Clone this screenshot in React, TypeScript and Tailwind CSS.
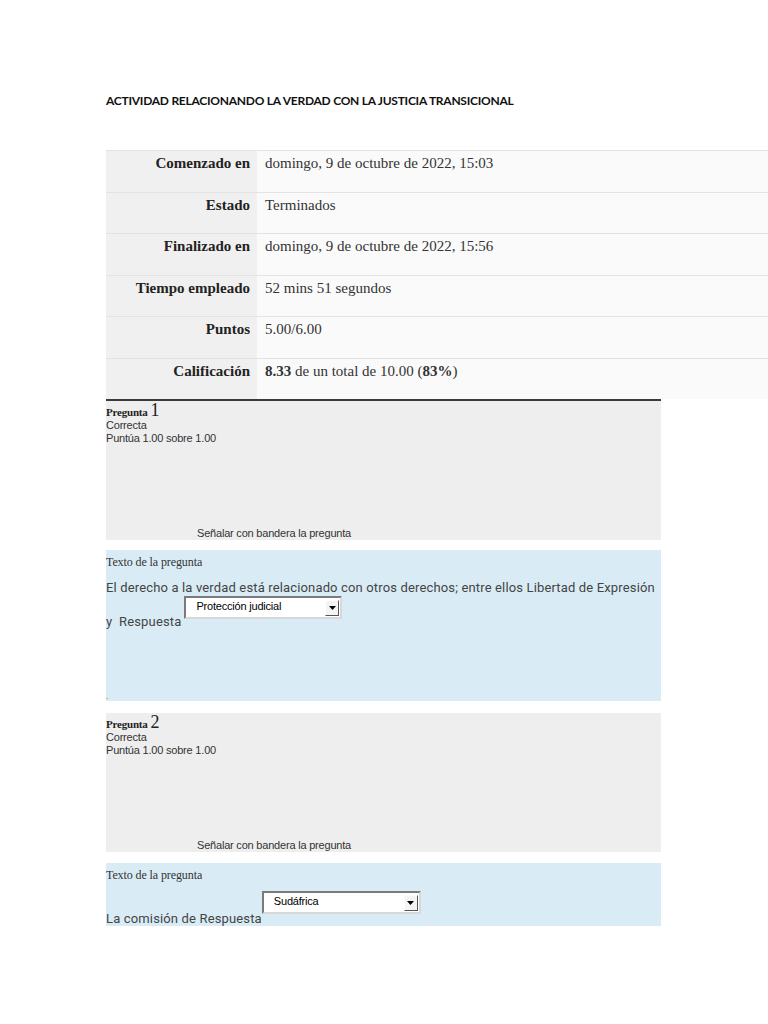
import React from "react";

const rows: { label: string; value: React.ReactNode }[] = [
  { label: "Comenzado en", value: "domingo, 9 de octubre de 2022, 15:03" },
  { label: "Estado", value: "Terminados" },
  { label: "Finalizado en", value: "domingo, 9 de octubre de 2022, 15:56" },
  { label: "Tiempo empleado", value: "52 mins 51 segundos" },
  { label: "Puntos", value: "5.00/6.00" },
  {
    label: "Calificación",
    value: (
      <>
        <b>8.33</b> de un total de 10.00 (<b>83%</b>)
      </>
    ),
  },
];

function FakeSelect({ text, width }: { text: string; width: number }) {
  return (
    <div
      className="flex h-[23px] items-start bg-white border-2 border-t-[#7a7a7a] border-l-[#7a7a7a] border-r-[#d8d8d8] border-b-[#d8d8d8]"
      style={{ width }}
    >
      <span className="flex-1 pl-[10px] pt-[1px] text-[11px] leading-[14px] text-black font-['Liberation_Sans',Arial,sans-serif] tracking-[-0.2px]">
        {text}
      </span>
      <span className="mt-[2px] mr-[1px] flex h-[16px] w-[14px] items-center justify-center bg-[#f4f4f4] border border-t-white border-l-white border-r-[#555] border-b-[#555]">
        <svg width="7" height="4" viewBox="0 0 7 4">
          <path d="M0 0h7L3.5 4z" fill="#000" />
        </svg>
      </span>
    </div>
  );
}

function QuestionInfo({ n }: { n: number }) {
  return (
    <div className="w-[555px] h-[139px] bg-[#eeeeee] flex flex-col">
      <div className="flex h-[18px] pt-[1px] items-baseline text-[#222] font-['Liberation_Serif','Times_New_Roman',serif] leading-[17px]">
        <span className="text-[11px] font-bold tracking-[-0.2px]">Pregunta</span>
        <span className="text-[18px] ml-[3px]">{n}</span>
      </div>
      <div className="font-['Liberation_Sans',Arial,sans-serif] text-[11px] leading-[13px] text-[#333] tracking-[-0.2px]">
        <div>Correcta</div>
        <div>Puntúa 1.00 sobre 1.00</div>
      </div>
      <div className="mt-auto pl-[91px] font-['Liberation_Sans',Arial,sans-serif] text-[11px] leading-[13px] text-[#333] tracking-[-0.2px]">
        Señalar con bandera la pregunta
      </div>
    </div>
  );
}

export default function App() {
  return (
    <div className="min-h-[1024px] bg-white pl-[106px] pt-[93px]">
      <h1 className="font-['Lato','Open_Sans',sans-serif] font-bold text-[12px] leading-[16px] text-[#111] tracking-[-0.25px]">
        ACTIVIDAD RELACIONANDO LA VERDAD CON LA JUSTICIA TRANSICIONAL
      </h1>

      {/* summary table */}
      <div className="mt-[41px] font-['Liberation_Serif','Times_New_Roman',serif] text-[15px] leading-[18px] text-[#333]">
        {rows.map((r) => (
          <div key={r.label} className="flex h-[41.5px] border-t border-[#e3e3e3]">
            <div className="w-[151px] shrink-0 bg-[#f0f0f0] text-right pr-[7px] pt-[3px] font-bold text-[#222]">
              {r.label}
            </div>
            <div className="flex-1 bg-[#fafafa] pl-[8px] pt-[3px]">{r.value}</div>
          </div>
        ))}
      </div>

      {/* question 1 */}
      <div className="w-[555px] border-t-2 border-[#3a3a3a]">
        <QuestionInfo n={1} />
      </div>
      <div className="mt-[10px] w-[555px] h-[151px] bg-[#d9ecf6] flex flex-col text-[#333]">
        <div className="pt-[4px] font-['Liberation_Serif','Times_New_Roman',serif] text-[12px] leading-[16px] tracking-[-0.1px]">
          Texto de la pregunta
        </div>
        <div className="mt-[10px] whitespace-nowrap font-['Roboto',Arial,sans-serif] text-[13px] leading-[16px] tracking-[0.15px] text-[#444]">
          El derecho a la verdad está relacionado con otros derechos; entre ellos Libertad de Expresión
        </div>
        <div className="flex items-end font-['Roboto',Arial,sans-serif] text-[13px] leading-[16px] tracking-[0.15px] text-[#444]">
          <span className="whitespace-pre">y  Respuesta</span>
          <span className="mb-[11px] ml-[3px]">
            <FakeSelect text="Protección judicial" width={158} />
          </span>
        </div>
        <div className="mt-auto text-[8px] leading-[10px] text-[#666]">.</div>
      </div>

      {/* question 2 */}
      <div className="mt-[12px]">
        <QuestionInfo n={2} />
      </div>
      <div className="mt-[11px] w-[555px] h-[63px] bg-[#d9ecf6] flex flex-col text-[#333]">
        <div className="pt-[4px] font-['Liberation_Serif','Times_New_Roman',serif] text-[12px] leading-[16px] tracking-[-0.1px]">
          Texto de la pregunta
        </div>
        <div className="mt-[8px] flex items-end font-['Roboto',Arial,sans-serif] text-[13px] leading-[16px] tracking-[0.15px] text-[#444]">
          <span>La comisión de Respuesta</span>
          <span className="mb-[13px]">
            <FakeSelect text="Sudáfrica" width={159} />
          </span>
        </div>
      </div>
    </div>
  );
}
